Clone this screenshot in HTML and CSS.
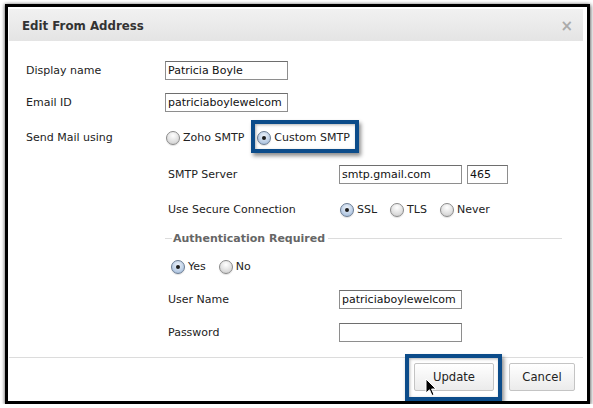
FILE: index.html
```html
<!DOCTYPE html>
<html>
<head>
<meta charset="utf-8">
<link rel="stylesheet" href="styles.css">
</head>
<body>
<div class="frame">
  <div class="header">
    <span class="title">Edit From Address</span>
    <span class="close">×</span>
  </div>
  <div class="body">
    <div class="row r1">
      <span class="lbl">Display name</span>
      <input class="txt" type="text" value="Patricia Boyle">
    </div>
    <div class="row r2">
      <span class="lbl">Email ID</span>
      <input class="txt" type="text" value="patriciaboylewelcom">
    </div>
    <div class="row r3">
      <span class="lbl">Send Mail using</span>
      <div class="radios">
        <span class="opt"><span class="radio"></span>Zoho SMTP</span>
        <span class="opt"><span class="radio on"></span>Custom SMTP<span class="hlbox hl-custom"></span></span>
      </div>
    </div>
    <div class="smtp">
      <div class="row sub r4">
        <span class="slbl">SMTP Server</span>
        <input class="txt" type="text" value="smtp.gmail.com">
        <input class="txt port" type="text" value="465">
      </div>
      <div class="row sub r5">
        <span class="slbl">Use Secure Connection</span>
        <div class="radios">
          <span class="opt"><span class="radio on"></span>SSL</span>
          <span class="opt"><span class="radio"></span>TLS</span>
          <span class="opt"><span class="radio"></span>Never</span>
        </div>
      </div>
      <div class="legend"><span class="legend-text">Authentication Required</span></div>
      <div class="row yesno">
        <span class="opt"><span class="radio on"></span>Yes</span>
        <span class="opt"><span class="radio"></span>No</span>
      </div>
      <div class="row sub r6">
        <span class="slbl">User Name</span>
        <input class="txt" type="text" value="patriciaboylewelcom">
      </div>
      <div class="row sub r7">
        <span class="slbl">Password</span>
        <input class="txt" type="password" value="">
      </div>
    </div>
  </div>
  <div class="footer">
    <span class="btnwrap">
      <button class="btn btn-update" type="button">Update</button>
      <span class="hlbox hl-update"></span>
      <svg class="cursor" width="12" height="19" viewBox="0 0 12 19"><path d="M1 1 L1 15 L4.5 11.8 L7 17.5 L9 16.6 L6.6 11 L11 11 Z" fill="#000" stroke="#fff" stroke-width="1"/></svg>
    </span>
    <button class="btn btn-cancel" type="button">Cancel</button>
  </div>
</div>
</body>
</html>
```
FILE: styles.css
```css
* { box-sizing: border-box; }
html, body { margin: 0; padding: 0; background: #fff; }
body {
  font-family: "DejaVu Sans", Verdana, sans-serif;
  font-size: 11px;
  color: #222;
}
.frame {
  margin: 4px 0 0 5px;
  width: 585px;
  height: 400px;
  border: 3px solid #000;
  background: #fff;
  box-shadow: 1px 1px 4px rgba(0,0,0,.55), -1px 0 3px rgba(0,0,0,.3);
  display: flex;
  flex-direction: column;
}
.header {
  margin: 2px 4px 0 1px;
  height: 32px;
  flex: none;
  background: linear-gradient(#f1f1f1, #e4e4e4);
  display: flex;
  align-items: center;
  justify-content: space-between;
  padding: 1px 10px 0 13px;
}
.title { font-weight: bold; font-size: 11.8px; color: #333; }
.close { font-weight: bold; font-size: 15px; color: #aaa; }

.body { flex: 1; padding-left: 18px; }
.row { display: flex; align-items: center; height: 19px; }
.lbl { width: 139px; flex: none; }
.r1 { margin-top: 20px; }
.r2 { margin-top: 13px; }
.r3 { margin-top: 16px; }

.txt {
  margin: 0;
  width: 123px;
  height: 19px;
  border: 1px solid #8e8e8e;
  border-top-color: #6e6e6e;
  padding: 0 2px;
  font-family: inherit;
  font-size: 11px;
  color: #111;
  background: #fff;
  outline: none;
}
.port { width: 41px; margin-left: 5px; }

.radios { display: flex; align-items: center; margin-left: 1px; }
.opt { display: inline-flex; align-items: center; margin-right: 13px; position: relative; height: 19px; }
.radio {
  width: 14px; height: 14px;
  border-radius: 50%;
  border: 1px solid #8a8a8a;
  background: radial-gradient(circle at 50% 30%, #ffffff, #dcdcdc 65%, #c6c6c6);
  box-shadow: 0 1px 1px rgba(0,0,0,.12);
  margin-right: 3px;
  flex: none;
  position: relative;
}
.radio.on {
  border-color: #6b7c92;
  background: radial-gradient(circle at 50% 35%, #eef3fa, #b3c8e2 70%, #98b2d2);
}
.radio.on::after {
  content: "";
  position: absolute;
  left: 4px; top: 4px;
  width: 4px; height: 4px;
  border-radius: 50%;
  background: #1c1c1c;
}

.hlbox {
  position: absolute;
  border: 4px solid #0c4c8a;
  box-shadow: 2px 3px 4px rgba(0,0,0,.45), inset 1px 1px 3px rgba(0,0,0,.3);
  pointer-events: none;
}
.hl-custom { left: -6px; right: -9px; top: -8px; bottom: -6px; }

.smtp { margin-left: 139px; width: 397px; }
.sub { padding-left: 3px; }
.slbl { width: 171px; flex: none; }
.r4 { margin-top: 18px; }
.r5 { margin-top: 16px; }
.legend {
  display: flex;
  align-items: center;
  height: 18px;
  margin-top: 10px;
}
.legend::before { content: ""; width: 7px; height: 1px; background: #dcdcdc; }
.legend::after { content: ""; flex: 1; height: 1px; background: #dcdcdc; }
.legend-text { font-weight: bold; color: #666; padding: 0 3px 0 1px; }
.yesno { margin-top: 10px; padding-left: 6px; }
.r6 { margin-top: 14px; }
.r7 { margin-top: 14px; }

.footer {
  flex: none;
  height: 44px;
  margin: 0 4px 0 1px;
  border-top: 1px solid #dcdcdc;
  display: flex;
  justify-content: flex-end;
  align-items: flex-start;
  padding: 5px 8px 0 0;
  gap: 15px;
}
.btnwrap { position: relative; display: inline-flex; }
.btn {
  margin: 0;
  height: 28px;
  border: 1px solid #c4c4c4;
  border-radius: 2px;
  background: linear-gradient(#ffffff, #ebebeb);
  font-family: inherit;
  font-size: 11.6px;
  color: #222;
  padding: 0;
}
.btn-update { width: 80px; }
.btn-cancel { width: 66px; }
.hl-update { left: -9px; right: -8px; top: -9px; bottom: -10px; }
.cursor { position: absolute; left: 11px; top: 15px; }
```
